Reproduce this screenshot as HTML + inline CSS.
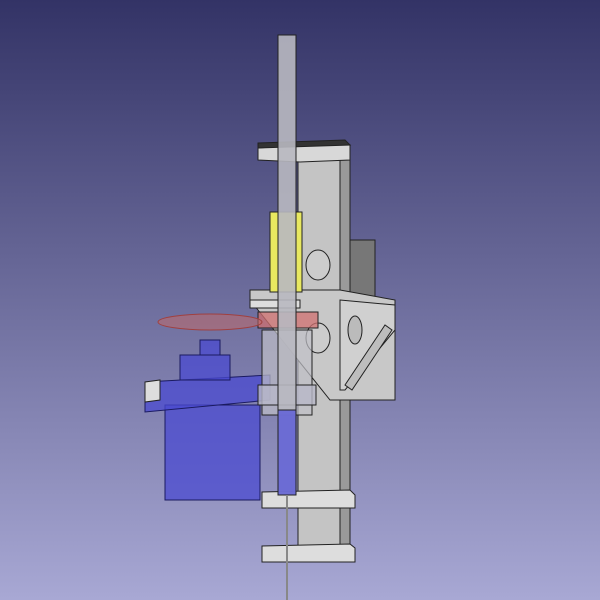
<!DOCTYPE html>
<html><head><style>html,body{margin:0;padding:0}body{width:600px;height:600px;overflow:hidden;background:linear-gradient(#333366,#a8a8d4)}</style></head><body>
<svg width="600" height="600" viewBox="0 0 600 600" style="position:absolute;left:0;top:0">
<g stroke="#222" stroke-width="1">
<!-- main plate -->
<polygon points="298,150 340,150 350,145 350,555 340,560 298,560" fill="#c4c4c4"/>
<polygon points="340,150 350,145 350,555 340,560" fill="#9a9a9a"/>
<!-- right block -->
<rect x="350" y="240" width="25" height="60" fill="#777"/>
<!-- top bracket -->
<polygon points="258,148 340,142 350,145 350,160 300,162 258,160" fill="#d8d8d8"/>
<polygon points="258,143 345,140 350,145 258,148" fill="#333"/>
<!-- lower mount -->
<polygon points="250,290 340,290 395,300 395,400 330,400 250,300" fill="#c8c8c8"/>
<polygon points="340,300 395,305 395,330 345,390 340,390" fill="#d0d0d0"/>
<polygon points="345,385 385,325 392,330 352,390" fill="#bdbdbd"/>
<ellipse cx="355" cy="330" rx="7" ry="14" fill="#bbb"/>
<polygon points="250,300 300,300 300,308 250,308" fill="#ddd"/>
<!-- screws -->
<ellipse cx="318" cy="265" rx="12" ry="15" fill="#ccc"/>
<ellipse cx="318" cy="338" rx="12" ry="15" fill="#ccc"/>
<!-- servo -->
<g fill="#4a4ad0" fill-opacity="0.75" stroke="#1a1a60">
<rect x="165" y="405" width="95" height="95"/>
<polygon points="145,382 270,375 270,400 145,412"/>
<rect x="180" y="355" width="50" height="25"/>
<rect x="200" y="340" width="20" height="15"/>
</g>
<polygon points="145,382 160,380 160,400 145,402" fill="#ddd"/>
<!-- collar / cylinder -->
<rect x="262" y="330" width="50" height="85" fill="#c0c0c8" fill-opacity="0.7"/>
<rect x="258" y="385" width="58" height="20" fill="#b8b8c8" fill-opacity="0.8"/>
<rect x="258" y="312" width="60" height="16" fill="#d07070" fill-opacity="0.75"/>
<ellipse cx="210" cy="322" rx="52" ry="8" fill="#c06a6a" fill-opacity="0.55" stroke="#a04040"/>
<rect x="270" y="212" width="32" height="80" fill="#e8e860"/>
<!-- bottom brackets -->
<polygon points="262,492 350,490 355,495 355,508 262,508" fill="#ddd"/>
<polygon points="262,546 350,544 355,548 355,562 262,562" fill="#ddd"/>
<!-- rod -->
<rect x="278" y="35" width="18" height="460" fill="#b8b8c0" fill-opacity="0.9"/>
<rect x="278" y="410" width="18" height="85" fill="#5a5ad8" fill-opacity="0.8"/>
</g>
<line x1="287" y1="495" x2="287" y2="600" stroke="#888" stroke-width="2"/>
</svg>
</body></html>
